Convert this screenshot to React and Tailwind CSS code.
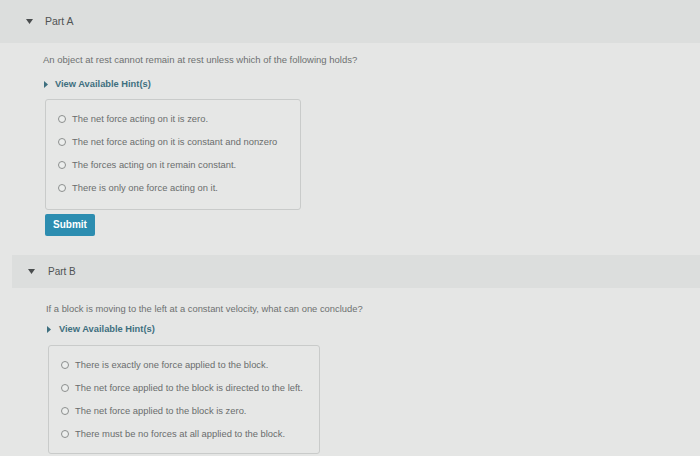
import React from "react";

const partA = {
  label: "Part A",
  question: "An object at rest cannot remain at rest unless which of the following holds?",
  options: [
    "The net force acting on it is zero.",
    "The net force acting on it is constant and nonzero",
    "The forces acting on it remain constant.",
    "There is only one force acting on it.",
  ],
};

const partB = {
  label: "Part B",
  question: "If a block is moving to the left at a constant velocity, what can one conclude?",
  options: [
    "There is exactly one force applied to the block.",
    "The net force applied to the block is directed to the left.",
    "The net force applied to the block is zero.",
    "There must be no forces at all applied to the block.",
  ],
};

function CaretDown() {
  return (
    <svg width="7" height="5" viewBox="0 0 7 5" className="shrink-0">
      <path d="M0 0 L7 0 L3.5 5 Z" fill="#4a4d4e" />
    </svg>
  );
}

function CaretRight() {
  return (
    <svg width="4" height="7" viewBox="0 0 4 7" className="shrink-0">
      <path d="M0 0 L4 3.5 L0 7 Z" fill="#3e6f7f" />
    </svg>
  );
}

function Radio() {
  return <span className="w-[8px] h-[8px] rounded-full border border-[#8c8f8e] bg-[#eceeed] shrink-0" />;
}

function Options({ items, className }) {
  return (
    <div className={"border border-[#c9cbca] rounded-[3px] bg-[#e6e7e6] " + className}>
      {items.map((t) => (
        <div key={t} className="flex items-center gap-[6px] h-[23px] pl-[12px]">
          <Radio />
          <span className="text-[9.4px] text-[#6a6d6d]">{t}</span>
        </div>
      ))}
    </div>
  );
}

export default function App() {
  return (
    <div
      className="w-[700px] h-[456px] overflow-hidden bg-[#e5e6e5]"
      style={{ fontFamily: '"Liberation Sans", Arial, sans-serif' }}
    >
      {/* Part A */}
      <div className="h-[43px] bg-[#dcdedd] flex items-center gap-[12px] pl-[26px]">
        <CaretDown />
        <span className="text-[10.5px] text-[#505354]">{partA.label}</span>
      </div>

      <div className="pl-[43px] pt-[11px]">
        <p className="text-[9.5px] leading-[12px] text-[#6e7171]">{partA.question}</p>
        <div className="flex items-center gap-[7px] mt-[12px] pl-[1px]">
          <CaretRight />
          <span className="text-[9.3px] font-bold text-[#3e6f7f]">View Available Hint(s)</span>
        </div>
        <Options items={partA.options} className="w-[256px] h-[111px] ml-[2px] mt-[7px] pt-[8px]" />
        <button className="ml-[2px] mt-[4px] w-[50px] h-[22px] bg-[#2c8db0] rounded-[2px] text-white text-[10px] font-bold">
          Submit
        </button>
      </div>

      {/* Part B */}
      <div className="mt-[19px] ml-[12px] h-[33px] bg-[#dcdedd] flex items-center gap-[13px] pl-[16px]">
        <CaretDown />
        <span className="text-[10px] text-[#505354]">{partB.label}</span>
      </div>

      <div className="pl-[46px] pt-[15px]">
        <p className="text-[9.4px] leading-[12px] text-[#6e7171]">{partB.question}</p>
        <div className="flex items-center gap-[8px] mt-[8px] pl-[1px]">
          <CaretRight />
          <span className="text-[9.3px] font-bold text-[#3e6f7f]">View Available Hint(s)</span>
        </div>
        <Options items={partB.options} className="w-[272px] h-[109px] ml-[2px] mt-[8px] pt-[8px]" />
      </div>
    </div>
  );
}
